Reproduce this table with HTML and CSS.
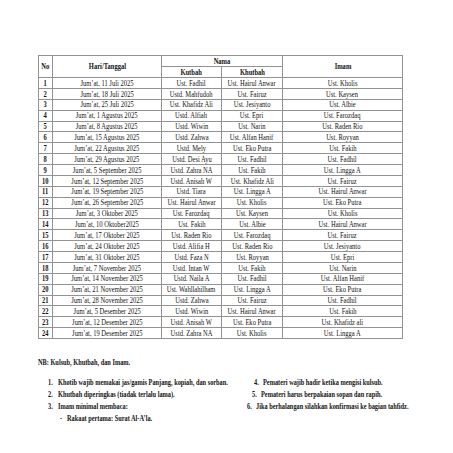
FILE: index.html
```html
<!DOCTYPE html>
<html lang="id">
<head>
<meta charset="utf-8">
<title>Jadwal Jum'at</title>
<link rel="stylesheet" href="styles.css">
</head>
<body>
<div class="page">
  <div class="sched">
    <div class="c h span2r"><span>No</span></div>
    <div class="c h span2r"><span>Hari/Tanggal</span></div>
    <div class="c h span2c"><span>Nama</span></div>
    <div class="c h span2r imam"><span>Imam</span></div>
    <div class="c h"><span>Kutbah</span></div>
    <div class="c h"><span>Khutbah</span></div>

    <div class="c b"><span>1</span></div><div class="c"><span>Jum’at, 11 Juli 2025</span></div><div class="c"><span>Ust. Fadhil</span></div><div class="c"><span>Ust. Hairul Anwar</span></div><div class="c"><span>Ust. Kholis</span></div>
    <div class="c b"><span>2</span></div><div class="c"><span>Jum’at, 18 Juli 2025</span></div><div class="c"><span>Ustd. Mahfudoh</span></div><div class="c"><span>Ust. Fairuz</span></div><div class="c"><span>Ust. Kaysen</span></div>
    <div class="c b"><span>3</span></div><div class="c"><span>Jum’at, 25 Juli 2025</span></div><div class="c"><span>Ust. Khafidz Ali</span></div><div class="c"><span>Ust. Jesiyanto</span></div><div class="c"><span>Ust. Albie</span></div>
    <div class="c b"><span>4</span></div><div class="c"><span>Jum’at, 1 Agustus 2025</span></div><div class="c"><span>Ustd. Alfiah</span></div><div class="c"><span>Ust. Epri</span></div><div class="c"><span>Ust. Farozdaq</span></div>
    <div class="c b"><span>5</span></div><div class="c"><span>Jum’at, 8 Agustus 2025</span></div><div class="c"><span>Ustd. Wiwin</span></div><div class="c"><span>Ust. Narin</span></div><div class="c"><span>Ust. Raden Rio</span></div>
    <div class="c b"><span>6</span></div><div class="c"><span>Jum’at, 15 Agustus 2025</span></div><div class="c"><span>Ustd. Zahwa</span></div><div class="c"><span>Ust. Alfan Hanif</span></div><div class="c"><span>Ust. Royyan</span></div>
    <div class="c b"><span>7</span></div><div class="c"><span>Jum’at, 22 Agustus 2025</span></div><div class="c"><span>Ustd. Mely</span></div><div class="c"><span>Ust. Eko Putra</span></div><div class="c"><span>Ust. Fakih</span></div>
    <div class="c b"><span>8</span></div><div class="c"><span>Jum’at, 29 Agustus 2025</span></div><div class="c"><span>Ustd. Desi Ayu</span></div><div class="c"><span>Ust. Fadhil</span></div><div class="c"><span>Ust. Fadhil</span></div>
    <div class="c b"><span>9</span></div><div class="c"><span>Jum’at, 5 September 2025</span></div><div class="c"><span>Ustd. Zahra NA</span></div><div class="c"><span>Ust. Fakih</span></div><div class="c"><span>Ust. Lingga A</span></div>
    <div class="c b"><span>10</span></div><div class="c"><span>Jum’at, 12 September 2025</span></div><div class="c"><span>Ustd. Anisah W</span></div><div class="c"><span>Ust. Khafidz Ali</span></div><div class="c"><span>Ust. Fairuz</span></div>
    <div class="c b"><span>11</span></div><div class="c"><span>Jum’at, 19 September 2025</span></div><div class="c"><span>Ustd. Tiara</span></div><div class="c"><span>Ust. Lingga A</span></div><div class="c"><span>Ust. Hairul Anwar</span></div>
    <div class="c b"><span>12</span></div><div class="c"><span>Jum’at, 26 September 2025</span></div><div class="c"><span>Ust. Hairul Anwar</span></div><div class="c"><span>Ust. Kholis</span></div><div class="c"><span>Ust. Eko Putra</span></div>
    <div class="c b"><span>13</span></div><div class="c"><span>Jum’at, 3 Oktober 2025</span></div><div class="c"><span>Ust. Farozdaq</span></div><div class="c"><span>Ust. Kaysen</span></div><div class="c"><span>Ust. Kholis</span></div>
    <div class="c b"><span>14</span></div><div class="c"><span>Jum’at, 10 Oktober2025</span></div><div class="c"><span>Ust. Fakih</span></div><div class="c"><span>Ust. Albie</span></div><div class="c"><span>Ust. Hairul Anwar</span></div>
    <div class="c b"><span>15</span></div><div class="c"><span>Jum’at, 17 Oktober 2025</span></div><div class="c"><span>Ust. Raden Rio</span></div><div class="c"><span>Ust. Farozdaq</span></div><div class="c"><span>Ust. Fairuz</span></div>
    <div class="c b"><span>16</span></div><div class="c"><span>Jum’at, 24 Oktober 2025</span></div><div class="c"><span>Ustd. Alifia H</span></div><div class="c"><span>Ust. Raden Rio</span></div><div class="c"><span>Ust. Jesiyanto</span></div>
    <div class="c b"><span>17</span></div><div class="c"><span>Jum’at, 31 Oktober 2025</span></div><div class="c"><span>Ustd. Faza N</span></div><div class="c"><span>Ust. Royyan</span></div><div class="c"><span>Ust. Epri</span></div>
    <div class="c b"><span>18</span></div><div class="c"><span>Jum’at, 7 November 2025</span></div><div class="c"><span>Ustd. Intan W</span></div><div class="c"><span>Ust. Fakih</span></div><div class="c"><span>Ust. Narin</span></div>
    <div class="c b"><span>19</span></div><div class="c"><span>Jum’at, 14 November 2025</span></div><div class="c"><span>Ustd. Naila A</span></div><div class="c"><span>Ust. Fadhil</span></div><div class="c"><span>Ust. Alfan Hanif</span></div>
    <div class="c b"><span>20</span></div><div class="c"><span>Jum’at, 21 November 2025</span></div><div class="c"><span>Ust. Wahllahilham</span></div><div class="c"><span>Ust. Lingga A</span></div><div class="c"><span>Ust. Eko Putra</span></div>
    <div class="c b"><span>21</span></div><div class="c"><span>Jum’at, 28 November 2025</span></div><div class="c"><span>Ustd. Zahwa</span></div><div class="c"><span>Ust. Fairuz</span></div><div class="c"><span>Ust. Fadhil</span></div>
    <div class="c b"><span>22</span></div><div class="c"><span>Jum’at, 5 Desember 2025</span></div><div class="c"><span>Ustd. Wiwin</span></div><div class="c"><span>Ust. Hairul Anwar</span></div><div class="c"><span>Ust. Fakih</span></div>
    <div class="c b"><span>23</span></div><div class="c"><span>Jum’at, 12 Desember 2025</span></div><div class="c"><span>Ustd. Anisah W</span></div><div class="c"><span>Ust. Eko Putra</span></div><div class="c"><span>Ust. Khafidz ali</span></div>
    <div class="c b"><span>24</span></div><div class="c"><span>Jum’at, 19 Desember 2025</span></div><div class="c"><span>Ustd. Zahra NA</span></div><div class="c"><span>Ust. Kholis</span></div><div class="c"><span>Ust. Lingga A</span></div>
  </div>

  <div class="notes">
    <p class="nb"><span>NB: Kulsub, Khutbah, dan Imam.</span></p>
    <div class="items">
      <div class="li l"><span class="n">1.</span><span class="t">Khotib wajib memakai jas/gamis Panjang, kopiah, dan sorban.</span></div>
      <div class="li r r4"><span class="n">4.</span><span class="t">Pemateri wajib hadir ketika mengisi kulsub.</span></div>
      <div class="li l"><span class="n">2.</span><span class="t">Khutbah diperingkas (tiadak terlalu lama).</span></div>
      <div class="li r r5"><span class="n">5.</span><span class="t">Pemateri harus berpakaian sopan dan rapih.</span></div>
      <div class="li l"><span class="n">3.</span><span class="t">Imam minimal membaca:</span></div>
      <div class="li r r6"><span class="n">6.</span><span class="t">Jika berhalangan silahkan konfirmasi ke bagian tahfidz.</span></div>
      <div class="li sub"><span class="n">-</span><span class="t">Rakaat pertama: Surat Al-A’la.</span></div>
    </div>
  </div>
</div>
</body>
</html>
```

FILE: styles.css
```css
* { box-sizing: border-box; }
html, body { margin: 0; padding: 0; background: #ffffff; }
body {
  font-family: "Liberation Serif", "Times New Roman", serif;
  color: #141414;
}
.page {
  width: 453px;
  height: 453px;
  overflow: hidden;
  padding: 55px 0 0 38px;
}
.sched {
  display: grid;
  grid-template-columns: 13px 108px 59px 60px 119px;
  grid-template-rows: 10px 10px repeat(24, 9.875px);
  gap: 1px;
  background: #939393;
  border: 1px solid #939393;
  width: max-content;
}
.c {
  background: #ffffff;
  display: flex;
  align-items: center;
  justify-content: center;
  font-size: 8.6px;
  line-height: 1;
  white-space: nowrap;
  overflow: visible;
}
.c span {
  display: inline-block;
  flex: none;
  transform: scaleX(0.76);
  transform-origin: center center;
}
.h, .b { font-weight: bold; }
.span2r { grid-row: span 2; }
.span2c { grid-column: span 2; }
.imam { grid-column: 5; }

.notes {
  margin-top: 17px;
  font-weight: bold;
  font-size: 8.6px;
  line-height: 12px;
  white-space: nowrap;
}
.notes span { display: inline-block; transform: scaleX(0.735); transform-origin: left center; }
.nb { margin: 0; }
.items {
  margin-top: 8px;
  display: grid;
  grid-template-columns: 216px 1fr;
}
.li { display: flex; }
.li .n { width: 10px; flex: none; }
.l { padding-left: 10px; }
.r .n { width: 9px; }
.r4 { padding-left: 0; }
.r5 { margin-left: -2px; }
.r6 { margin-left: -7px; }
.sub { padding-left: 22px; }
.sub .n { width: 7px; }
```
